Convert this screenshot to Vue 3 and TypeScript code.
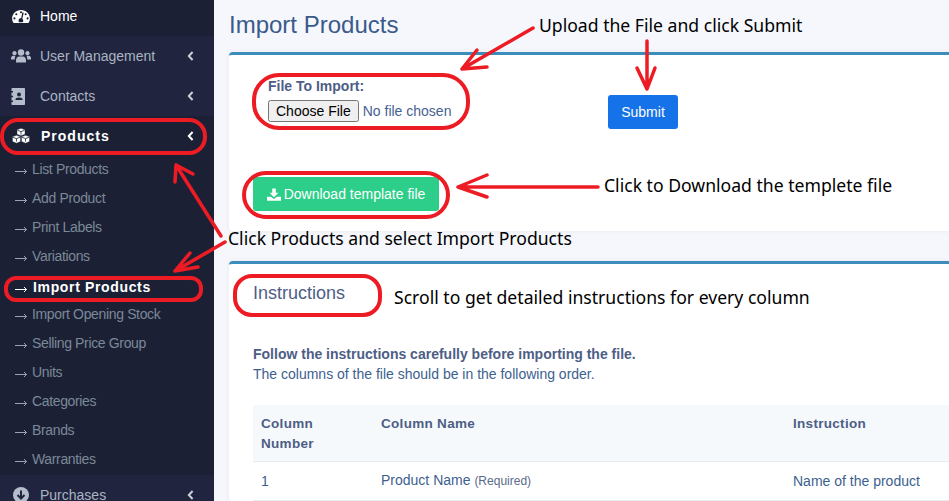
<script setup lang="ts">
const subItems = [
  { label: 'List Products' },
  { label: 'Add Product' },
  { label: 'Print Labels' },
  { label: 'Variations' },
  { label: 'Import Products', active: true },
  { label: 'Import Opening Stock' },
  { label: 'Selling Price Group' },
  { label: 'Units' },
  { label: 'Categories' },
  { label: 'Brands' },
  { label: 'Warranties' },
]
</script>

<template>
  <div class="page">
    <aside class="sidebar">
      <a class="nav home">
        <svg class="ico" viewBox="0 0 20 16" width="19" height="15"><path fill="#fff" d="M10 1C4.6 1 .5 5 .5 10.2c0 1.500.4 2.900 1 4 .2.4.6.6 1 .6h15c.4 0 .8-.2 1-.6.6-1.100 1-2.500 1-4C19.500 5 15.400 1 10 1z"/><g fill="#1c2035"><circle cx="10" cy="3.500" r="1.100"/><circle cx="5" cy="5.500" r="1.100"/><circle cx="3" cy="10" r="1.100"/><circle cx="17" cy="10" r="1.100"/><circle cx="15" cy="5.500" r="1.100"/><path d="M11.500 3.500l1.400.4-1.500 6.500c.6.5 1 1.200 1 2 0 .7-.2 1.300-.5 1.800h-4c-.3-.5-.5-1.100-.5-1.800 0-1.500 1.200-2.700 2.800-2.700z"/></g></svg>
        <span>Home</span>
      </a>
      <a class="nav alt">
        <svg class="ico" viewBox="0 0 20 14" width="20" height="14"><g fill="#b3bdcb"><circle cx="10" cy="3.500" r="3.200"/><circle cx="3.500" cy="4.200" r="2.100"/><circle cx="16.500" cy="4.200" r="2.100"/><path d="M5 13.500v-2.200C5 9 6.500 7.600 8 7.600h4c1.500 0 3 1.400 3 3.700v2.200z"/><path d="M0 10.500V9c0-1.300 1-2.300 2-2.300h2.500C4 7.500 3.800 8.500 3.800 10.500zM20 10.500V9c0-1.300-1-2.300-2-2.300h-2.500c.5.800.7 1.800.7 3.800z"/></g></svg>
        <span>User Management</span>
        <svg class="chev" viewBox="0 0 8 12" width="7" height="10"><path d="M6.500 1.200L2 6l4.500 4.800" fill="none" stroke="#c8d0da" stroke-width="2.400"/></svg>
      </a>
      <a class="nav alt">
        <svg class="ico book" viewBox="0 0 14 17" width="14" height="17"><path fill="#b3bdcb" d="M1.500 0H13c.6 0 1 .4 1 1v15c0 .6-.4 1-1 1H1.500c-.6 0-1-.4-1-1V1c0-.6.4-1 1-1z"/><path fill="#20243f" d="M0 3h2v1.500H0zM0 7.700h2v1.500H0zM0 12.500h2V14H0z"/><circle cx="8" cy="6.500" r="2" fill="#20243f"/><path fill="#20243f" d="M4.300 12c0-1.700 1.400-2.500 3.700-2.500s3.700.8 3.700 2.500z"/></svg>
        <span>Contacts</span>
        <svg class="chev" viewBox="0 0 8 12" width="7" height="10"><path d="M6.500 1.200L2 6l4.500 4.800" fill="none" stroke="#c8d0da" stroke-width="2.400"/></svg>
      </a>
      <a class="nav current">
        <svg class="ico" viewBox="0 0 18 16" width="18" height="16"><g fill="#fff" stroke="#1c2035" stroke-width=".4"><path d="M9 .3l4 1.400v4.600l-4 1.500-4-1.500V1.700z"/><path d="M4.500 7.300l4 1.400v4.800l-4 1.700-4-1.700V8.700z"/><path d="M13.500 7.300l4 1.400v4.800l-4 1.700-4-1.700V8.700z"/></g><g fill="none" stroke="#1c2035" stroke-width=".8"><path d="M5.500 2.300L9 3.600l3.500-1.300M9 3.600v3"/><path d="M1 9.300l3.500 1.300L8 9.300M4.500 10.600v3"/><path d="M10 9.300l3.500 1.300L17 9.300M13.500 10.600v3"/></g></svg>
        <span class="strong">Products</span>
        <svg class="chev" viewBox="0 0 8 12" width="7" height="10"><path d="M6.500 1.200L2 6l4.500 4.800" fill="none" stroke="#fff" stroke-width="2.400"/></svg>
      </a>
      <ul class="sub">
        <li v-for="item in subItems" :key="item.label" :class="{ on: item.active }">
          <svg class="to" viewBox="0 0 12 7" width="12" height="7"><path d="M0 3.500h11.500M9 1l2.500 2.500L9 6" fill="none" stroke="currentColor" stroke-width="1"/></svg>
          <span class="lbl">{{ item.label }}</span>
        </li>
      </ul>
      <a class="nav alt">
        <svg class="ico" viewBox="0 0 16 16" width="16" height="16"><circle cx="8" cy="8" r="8" fill="#b3bdcb"/><path d="M8 3.500v8M4.500 8L8 11.500 11.500 8" fill="none" stroke="#20243f" stroke-width="2"/></svg>
        <span>Purchases</span>
        <svg class="chev" viewBox="0 0 8 12" width="7" height="10"><path d="M6.500 1.200L2 6l4.500 4.800" fill="none" stroke="#c8d0da" stroke-width="2.400"/></svg>
      </a>
    </aside>

    <main class="main">
      <h1 class="title">Import Products</h1>

      <section class="card upload">
        <div class="row">
          <div class="field">
            <label class="lab">File To Import:</label>
            <input class="file" type="file" />
          </div>
          <button class="btn submit" type="button">Submit</button>
        </div>
        <button class="btn dl" type="button">
          <svg viewBox="0 0 16 14" width="14" height="13"><path fill="#fff" d="M6 0h4v5h3L8 10 3 5h3zM0 9.500h4.500L8 12l3.500-2.500H16V14H0z"/></svg>
          Download template file
        </button>
      </section>

      <section class="card info">
        <h2 class="subtitle">Instructions</h2>
        <p class="lead"><strong>Follow the instructions carefully before importing the file.</strong><br />The columns of the file should be in the following order.</p>
        <table class="tbl">
          <thead>
            <tr><th class="c1">Column Number</th><th class="c2">Column Name</th><th>Instruction</th></tr>
          </thead>
          <tbody>
            <tr><td>1</td><td>Product Name <small>(Required)</small></td><td>Name of the product</td></tr>
          </tbody>
        </table>
      </section>
    </main>

    <svg class="marks" viewBox="0 0 949 501" width="949" height="501" fill="none" stroke="#ed1c24" stroke-linecap="round" stroke-linejoin="round">
      <g stroke-width="4">
        <rect x="2" y="120" width="203" height="33" rx="16"/>
        <rect x="6" y="278" width="195" height="22" rx="10"/>
        <rect x="254" y="75" width="214" height="53" rx="25"/>
        <rect x="244" y="173" width="204" height="44" rx="22"/>
        <rect x="235" y="276" width="145" height="39" rx="17"/>
      </g>
      <g stroke-width="3.500">
        <path d="M221 236L176 165M176 165l-1 17M176 165l17 9"/>
        <path d="M225 242L175 271M175 271l15-18M175 271l23-4"/>
        <path d="M533 28L462 69M462 69l15-19M462 69l25-2"/>
        <path d="M647 41v48M647 89l-10-21M647 89l8-21"/>
        <path d="M598 187H458M458 187l29-12M458 187l29 10"/>
      </g>
    </svg>
    <span class="note n1">Upload the File and click Submit</span>
    <span class="note n2">Click to Download the templete file</span>
    <span class="note n3">Click Products and select Import Products</span>
    <span class="note n4">Scroll to get detailed instructions for every column</span>
  </div>
</template>

<style>
html, body { margin: 0; padding: 0; overflow: hidden; }
</style>

<style scoped>
.page {
  position: relative;
  display: flex;
  width: 949px;
  height: 501px;
  overflow: hidden;
  background: #f5f7fc;
  font-family: "Liberation Sans", Arial, sans-serif;
  font-size: 14px;
  color: #4d5e86;
}
.sidebar {
  flex: 0 0 214px;
  width: 214px;
  background: #1c2035;
  margin-top: -4px;
}
.nav {
  display: flex;
  align-items: center;
  height: 40px;
  padding-left: 11px;
  color: #a9b4c2;
  font-size: 14px;
}
.nav .ico { width: 20px; flex: 0 0 20px; margin-right: 9px; }
.nav .book { margin-left: -3px; margin-right: 12px; }
.nav span { flex: 1; }
.nav .chev { margin-right: 20px; }
.home { color: #fff; }
.alt { background: #20243f; }
.current { color: #fff; }
.strong { font-weight: 700; letter-spacing: 1px; padding-left: 1px; }
.sub { list-style: none; margin: -2px 0 0; padding: 0 0 2px; }
.sub li {
  display: flex;
  align-items: center;
  height: 29px;
  box-sizing: border-box;
  padding-left: 15px;
  color: #7a8997;
  font-size: 14px;
  letter-spacing: -.35px;
}
.sub li .to { flex: 0 0 12px; margin: 5px 5px 0 0; color: #98a4b0; }
.sub li.on { color: #fff; font-weight: 700; letter-spacing: .65px; padding-top: 4px; }
.sub li.on .to { color: #fff; margin-right: 6px; }
.main { flex: 1; min-width: 0; padding: 0 0 0 15px; }
.title {
  margin: 0;
  height: 52px;
  line-height: 49px;
  font-size: 24px;
  font-weight: 400;
  color: #3a5a8c;
}
.card {
  background: #fff;
  border-top: 3px solid #3c8dbc;
  border-radius: 4px 0 0 4px;
  box-shadow: 0 0 4px rgba(60, 70, 110, .08);
}
.upload { height: 179px; padding-left: 24px; box-sizing: border-box; }
.row { display: flex; height: 122px; padding-left: 15px; align-items: flex-start; }
.field { width: 340px; padding-top: 23px; }
.lab { display: block; font-weight: 700; font-size: 14px; line-height: 16px; color: #4d5e86; margin-bottom: 6px; }
.file { display: block; font: 14px "Liberation Sans", Arial, sans-serif; color: #46628f; }
.btn {
  border: 0;
  border-radius: 3px;
  color: #fff;
  font: 14px "Liberation Sans", Arial, sans-serif;
  padding: 0;
}
.submit { width: 70px; height: 34px; margin-top: 40px; background: #1572e8; }
.dl {
  display: flex;
  align-items: center;
  justify-content: center;
  gap: 3px;
  width: 186px;
  height: 34px;
  background: #2dce89;
}
.info { margin-top: 30px; height: 240px; padding-left: 24px; box-sizing: border-box; }
.subtitle { margin: 0; padding-top: 19px; height: 44px; font-size: 18px; line-height: 20px; font-weight: 400; color: #4d5e86; box-sizing: content-box; }
.lead { margin: 0; padding-top: 17px; font-size: 14px; line-height: 20px; color: #3d5f8f; }
.lead strong { color: #4d5e86; }
.tbl { margin-top: 21px; width: 696px; border-collapse: collapse; table-layout: fixed; font-size: 14px; color: #3d5f8f; }
.tbl th { background: #f6f9fc; text-align: left; vertical-align: top; font-weight: 700; font-size: 13.500px; line-height: 20px; padding: 9px 8px 7px; letter-spacing: .3px; color: #4d5e86; border-bottom: 1px solid #e9ecef; }
.tbl td { padding: 9px 8px; line-height: 19px; border-bottom: 1px solid #e9ecef; }
.tbl small { font-size: 12px; color: #5a6a8a; }
.c1 { width: 104px; }
.c2 { width: 396px; }
.marks { position: absolute; inset: 0; pointer-events: none; }
.note { position: absolute; font-family: "Noto Sans", "Open Sans", sans-serif; font-size: 17.600px; line-height: 24px; color: #000; white-space: nowrap; }
.n1 { left: 539px; top: 13px; }
.n2 { left: 604px; top: 173px; }
.n3 { left: 228px; top: 226px; }
.n4 { left: 394px; top: 285px; }
</style>
